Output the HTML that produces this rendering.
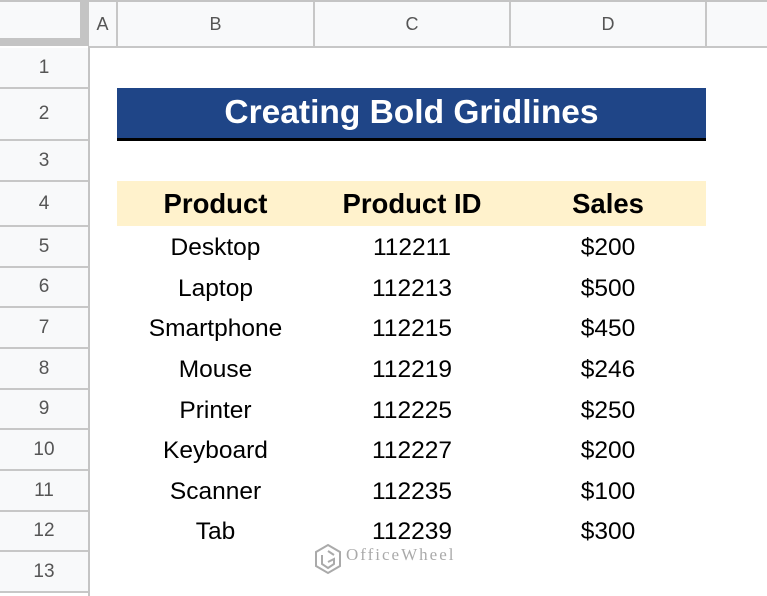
<!DOCTYPE html>
<html><head><style>
body{margin:0;width:767px;height:596px;overflow:hidden;background:#fff;font-family:"Liberation Sans",Arial,sans-serif;position:relative}
.a{position:absolute}
.ch{position:absolute;top:2px;height:44px;background:#f8f9fa;border-right:2px solid #c7c7c7;box-sizing:border-box;text-align:center;line-height:44px;font-size:18px;color:#555}
.rh{position:absolute;left:0;width:88px;background:#f8f9fa;border-bottom:2px solid #c7c7c7;box-sizing:border-box;text-align:center;font-size:19px;color:#555}
.c{position:absolute;text-align:center;font-size:24.5px;color:#000}
.h{font-weight:bold;font-size:27.5px}
</style></head><body>
<div class="a" style="left:0;top:0;width:767px;height:2px;background:#c4c4c4"></div>
<div class="a" style="left:0;top:2px;width:80px;height:36px;background:#f8f9fa"></div>
<div class="a" style="left:80px;top:2px;width:9px;height:44px;background:#c4c4c4"></div>
<div class="a" style="left:0;top:38px;width:89px;height:8px;background:#c4c4c4"></div>
<div class="ch" style="left:89px;width:29px">A</div>
<div class="ch" style="left:118px;width:197px">B</div>
<div class="ch" style="left:315px;width:196px">C</div>
<div class="ch" style="left:511px;width:196px">D</div>
<div class="ch" style="left:707px;width:60px;border-right:none"></div>
<div class="a" style="left:89px;top:46px;width:678px;height:2px;background:#c7c7c7"></div>
<div class="a" style="left:88px;top:46px;width:2px;height:550px;background:#c4c4c4"></div>
<div class="rh" style="top:48px;height:41px;line-height:39px">1</div>
<div class="rh" style="top:89px;height:52px;line-height:50px">2</div>
<div class="rh" style="top:141px;height:41px;line-height:39px">3</div>
<div class="rh" style="top:182px;height:45px;line-height:43px">4</div>
<div class="rh" style="top:227px;height:41px;line-height:39px">5</div>
<div class="rh" style="top:268px;height:40px;line-height:38px">6</div>
<div class="rh" style="top:308px;height:41px;line-height:39px">7</div>
<div class="rh" style="top:349px;height:41px;line-height:39px">8</div>
<div class="rh" style="top:390px;height:40px;line-height:38px">9</div>
<div class="rh" style="top:430px;height:41px;line-height:39px">10</div>
<div class="rh" style="top:471px;height:41px;line-height:39px">11</div>
<div class="rh" style="top:512px;height:40px;line-height:38px">12</div>
<div class="rh" style="top:552px;height:41px;line-height:39px">13</div>
<div class="a" style="left:117px;top:88px;width:589px;height:50px;background:#1f4587;color:#fff;font-weight:bold;font-size:33.5px;text-align:center;line-height:50px">Creating Bold Gridlines</div>
<div class="a" style="left:117px;top:138px;width:589px;height:3px;background:#000"></div>
<div class="a" style="left:117px;top:181px;width:589px;height:45px;background:#fff2cc"></div>
<div class="c h" style="left:117px;top:181px;width:197px;line-height:45px">Product</div>
<div class="c h" style="left:314px;top:181px;width:196px;line-height:45px">Product ID</div>
<div class="c h" style="left:510px;top:181px;width:196px;line-height:45px">Sales</div>
<div class="c" style="left:117px;top:227px;width:197px;line-height:41px">Desktop</div><div class="c" style="left:314px;top:227px;width:196px;line-height:41px">112211</div><div class="c" style="left:510px;top:227px;width:196px;line-height:41px">$200</div>
<div class="c" style="left:117px;top:268px;width:197px;line-height:41px">Laptop</div><div class="c" style="left:314px;top:268px;width:196px;line-height:41px">112213</div><div class="c" style="left:510px;top:268px;width:196px;line-height:41px">$500</div>
<div class="c" style="left:117px;top:308px;width:197px;line-height:41px">Smartphone</div><div class="c" style="left:314px;top:308px;width:196px;line-height:41px">112215</div><div class="c" style="left:510px;top:308px;width:196px;line-height:41px">$450</div>
<div class="c" style="left:117px;top:349px;width:197px;line-height:41px">Mouse</div><div class="c" style="left:314px;top:349px;width:196px;line-height:41px">112219</div><div class="c" style="left:510px;top:349px;width:196px;line-height:41px">$246</div>
<div class="c" style="left:117px;top:390px;width:197px;line-height:41px">Printer</div><div class="c" style="left:314px;top:390px;width:196px;line-height:41px">112225</div><div class="c" style="left:510px;top:390px;width:196px;line-height:41px">$250</div>
<div class="c" style="left:117px;top:430px;width:197px;line-height:41px">Keyboard</div><div class="c" style="left:314px;top:430px;width:196px;line-height:41px">112227</div><div class="c" style="left:510px;top:430px;width:196px;line-height:41px">$200</div>
<div class="c" style="left:117px;top:471px;width:197px;line-height:41px">Scanner</div><div class="c" style="left:314px;top:471px;width:196px;line-height:41px">112235</div><div class="c" style="left:510px;top:471px;width:196px;line-height:41px">$100</div>
<div class="c" style="left:117px;top:511px;width:197px;line-height:41px">Tab</div><div class="c" style="left:314px;top:511px;width:196px;line-height:41px">112239</div><div class="c" style="left:510px;top:511px;width:196px;line-height:41px">$300</div>
<svg class="a" style="left:312px;top:543px" width="32" height="32" viewBox="0 0 32 32" fill="none" stroke="#aaa" stroke-width="2"><path d="M16 2 L28 9 L28 23 L16 30 L4 23 L4 9 Z"/><path d="M16 8 L22 12 M10 12 L10 21 L16 25 L22 21 L22 16 L16 19"/></svg>
<div class="a" style="left:346px;top:545px;font-family:'Liberation Serif',serif;font-size:17px;letter-spacing:2px;color:#aaa">OfficeWheel</div>
</body></html>
